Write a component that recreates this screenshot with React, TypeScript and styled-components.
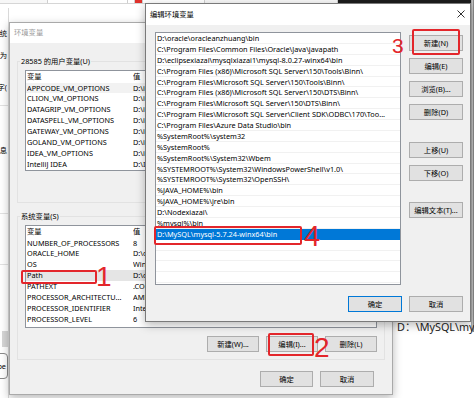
import React from "react";
import styled, { createGlobalStyle } from "styled-components";

const UI_FONT = `"Noto Sans", "Noto Sans CJK SC", sans-serif`;

const Global = createGlobalStyle`
  html, body { margin: 0; padding: 0; background: #ffffff; }
  body { font-family: ${UI_FONT}; }
  * { box-sizing: border-box; }
`;

const Desktop = styled.div`
  position: relative;
  width: 474px;
  height: 398px;
  overflow: hidden;
  background: #ffffff;
  font-family: ${UI_FONT};
  font-size: 7.3px;
  color: #000;
`;

const Win = styled.div<{ $x: number; $y: number; $w: number; $h: number }>`
  position: absolute;
  left: ${(p) => p.$x}px;
  top: ${(p) => p.$y}px;
  width: ${(p) => p.$w}px;
  height: ${(p) => p.$h}px;
`;

/* ---------- background windows ---------- */
const TopStrip = styled(Win)`
  display: flex;
  background: #ffffff;
`;
const TopCell = styled.div<{ $w: number; $c: string }>`
  width: ${(p) => p.$w}px;
  flex: none;
  height: 100%;
  background: ${(p) => p.$c};
  border-right: 1px solid #cfcfcf;
  border-bottom: 1px solid #d6d6d6;
`;
const RightEdge = styled(Win)`
  background: linear-gradient(to right, #8a8a8a, #d0d0d0 40%, #6f6f6f);
`;

const BackWindow = styled(Win)`
  display: flex;
  flex-direction: column;
  background: #ffffff;
  border-right: 1px solid #d9d9d9;
`;
const SideLabel = styled.div<{ $mt: number }>`
  margin-top: ${(p) => p.$mt}px;
  height: 12px;
  line-height: 12px;
  text-align: right;
  padding-right: 1px;
  white-space: nowrap;
  font-size: 7.3px;
`;
const SideRule = styled.div<{ $mt: number }>`
  margin-top: ${(p) => p.$mt}px;
  height: 1px;
  background: #e2e2e2;
`;
const SideBlock = styled.div<{ $mt: number }>`
  margin-top: ${(p) => p.$mt}px;
  margin-left: auto;
  width: 6px;
  height: 16px;
  background: #d6d6d6;
`;
const SideButton = styled.div<{ $mt: number }>`
  margin-top: ${(p) => p.$mt}px;
  height: 26px;
  border: 1px solid #8a8a8a;
  border-radius: 4px;
  text-align: right;
  line-height: 24px;
  padding-right: 1px;
  font-size: 7.3px;
`;

/* ---------- dialogs ---------- */
const Dialog = styled(Win)<{ $active?: boolean }>`
  display: flex;
  flex-direction: column;
  background: #f0f0f0;
  border: 1px solid ${(p) => (p.$active ? "#7a7a7a" : "#a9a9a9")};
  box-shadow: 0 3px 9px rgba(0, 0, 0, 0.28);
`;
const TitleBar = styled.div<{ $active?: boolean; $h: number }>`
  height: ${(p) => p.$h}px;
  flex: none;
  display: flex;
  align-items: center;
  justify-content: space-between;
  padding: 0 5px 2px 4px;
  background: #ffffff;
  color: ${(p) => (p.$active ? "#000" : "#9a9a9a")};
  font-size: 7.3px;
`;
const CloseIcon = () => (
  <svg width="8" height="8" viewBox="0 0 8 8">
    <path d="M0.5 0.5 L7.5 7.5 M7.5 0.5 L0.5 7.5" stroke="#1a1a1a" strokeWidth="0.9" />
  </svg>
);

const EnvBody = styled.div`
  flex: 1;
  display: flex;
  flex-direction: column;
  padding: 0 7px 0 7px;
`;
const Group = styled.fieldset<{ $mt: number }>`
  margin: ${(p) => p.$mt}px 0 0 0;
  padding: 4px 7px 7px 7px;
  border: 1px solid #e2e2e2;
  min-width: 0;
  display: flex;
  flex-direction: column;
`;
const Legend = styled.legend`
  margin-left: -5px;
  padding: 0 1px;
  font-size: 7.3px;
  line-height: 10px;
  height: 10px;
`;

const ListBox = styled.div<{ $h: number }>`
  height: ${(p) => p.$h}px;
  flex: none;
  background: #ffffff;
  border: 1px solid #8f949c;
  overflow: hidden;
`;
const VarHeader = styled.div`
  display: grid;
  grid-template-columns: 106px 1fr;
  height: 11.5px;
  line-height: 11.5px;
  padding-left: 1px;
  white-space: nowrap;
`;
const VarRow = styled.div<{ $sel?: string }>`
  display: grid;
  grid-template-columns: 106px 1fr;
  height: 10.86px;
  line-height: 10.86px;
  padding-left: 1px;
  white-space: nowrap;
  overflow: hidden;
  background: ${(p) => p.$sel ?? "transparent"};
`;
const Cell = styled.span`
  overflow: hidden;
  white-space: nowrap;
`;

const BtnRow = styled.div<{ $mt: number; $pr?: number }>`
  display: flex;
  justify-content: flex-end;
  gap: 7px;
  margin-top: ${(p) => p.$mt}px;
  padding-right: ${(p) => p.$pr ?? 0}px;
`;
const Btn = styled.button<{ $default?: boolean; $w?: number }>`
  width: ${(p) => p.$w ?? 53}px;
  height: 16px;
  flex: none;
  padding: 0;
  margin: 0;
  background: #e1e1e1;
  border: 1px solid ${(p) => (p.$default ? "#0078d7" : "#adadad")};
  font-family: ${UI_FONT};
  font-size: 7.3px;
  color: #000;
  line-height: 14px;
`;

/* edit dialog */
const EditBody = styled.div`
  flex: 1;
  display: flex;
  flex-direction: column;
  padding: 7px 7px 10px 9px;
`;
const EditTop = styled.div`
  display: flex;
  gap: 8px;
`;
const PathList = styled(ListBox)`
  width: 246px;
`;
const PathRow = styled.div<{ $sel?: boolean }>`
  height: 10.89px;
  line-height: 10.89px;
  padding-left: 1px;
  white-space: nowrap;
  overflow: hidden;
  background: ${(p) => (p.$sel ? "#0078d7" : "transparent")};
  color: ${(p) => (p.$sel ? "#ffffff" : "#000")};
  box-shadow: inset 0 -1px 0 ${(p) => (p.$sel ? "#0078d7" : "#f1f1f1")};
`;
const SideButtons = styled.div`
  display: flex;
  flex-direction: column;
  padding-top: 3px;
`;
const SideBtn = styled(Btn)<{ $gap: number }>`
  margin-top: ${(p) => p.$gap}px;
`;

/* desktop text + annotations */
const DesktopNote = styled(Win)`
  font-family: "Noto Sans", "Noto Sans CJK SC", sans-serif;
  font-size: 10.8px;
  line-height: 14px;
  color: #222;
  white-space: nowrap;
  overflow: hidden;
`;
const RedBox = styled(Win)`
  border: 2px solid #e3262b;
  border-radius: 2px;
`;
const RedNum = styled.div<{ $x: number; $y: number; $size: number }>`
  position: absolute;
  left: ${(p) => p.$x}px;
  top: ${(p) => p.$y}px;
  font-family: "Liberation Sans", Arial, sans-serif;
  font-size: ${(p) => p.$size}px;
  line-height: 1;
  color: #e3262b;
`;

const userVars: [string, string, string?][] = [
  ["APPCODE_VM_OPTIONS", "D:\\idea\\jetbra\\vmoptions\\appcode.vmoptions", "#f2f2f2"],
  ["CLION_VM_OPTIONS", "D:\\idea\\jetbra\\vmoptions\\clion.vmoptions"],
  ["DATAGRIP_VM_OPTIONS", "D:\\idea\\jetbra\\vmoptions\\datagrip.vmoptions"],
  ["DATASPELL_VM_OPTIONS", "D:\\idea\\jetbra\\vmoptions\\dataspell.vmoptions"],
  ["GATEWAY_VM_OPTIONS", "D:\\idea\\jetbra\\vmoptions\\gateway.vmoptions"],
  ["GOLAND_VM_OPTIONS", "D:\\idea\\jetbra\\vmoptions\\goland.vmoptions"],
  ["IDEA_VM_OPTIONS", "D:\\idea\\jetbra\\vmoptions\\idea.vmoptions"],
  ["IntelliJ IDEA", "D:\\IntelliJ IDEA 2021.3\\bin;"],
];

const sysVars: [string, string, string?][] = [
  ["NUMBER_OF_PROCESSORS", "8"],
  ["ORACLE_HOME", "D:\\oracle\\oracleanzhuang"],
  ["OS", "Windows_NT"],
  ["Path", "D:\\oracle\\oracleanzhuang\\bin;C:\\Program Files", "#e5e5e5"],
  ["PATHEXT", ".COM;.EXE;.BAT;.CMD;.VBS;.VBE"],
  ["PROCESSOR_ARCHITECTU...", "AMD64"],
  ["PROCESSOR_IDENTIFIER", "Intel64 Family 6 Model 158"],
  ["PROCESSOR_LEVEL", "6"],
];

const paths = [
  "D:\\oracle\\oracleanzhuang\\bin",
  "C:\\Program Files\\Common Files\\Oracle\\Java\\javapath",
  "D:\\eclipsexiazai\\mysqlxiazai1\\mysql-8.0.27-winx64\\bin",
  "C:\\Program Files (x86)\\Microsoft SQL Server\\150\\Tools\\Binn\\",
  "C:\\Program Files\\Microsoft SQL Server\\150\\Tools\\Binn\\",
  "C:\\Program Files (x86)\\Microsoft SQL Server\\150\\DTS\\Binn\\",
  "C:\\Program Files\\Microsoft SQL Server\\150\\DTS\\Binn\\",
  "C:\\Program Files\\Microsoft SQL Server\\Client SDK\\ODBC\\170\\Too...",
  "C:\\Program Files\\Azure Data Studio\\bin",
  "%SystemRoot%\\system32",
  "%SystemRoot%",
  "%SystemRoot%\\System32\\Wbem",
  "%SYSTEMROOT%\\System32\\WindowsPowerShell\\v1.0\\",
  "%SYSTEMROOT%\\System32\\OpenSSH\\",
  "%JAVA_HOME%\\bin",
  "%JAVA_HOME%\\jre\\bin",
  "D:\\Nodexiazai\\",
  "%mysql%\\bin",
  "D:\\MySQL\\mysql-5.7.24-winx64\\bin",
  "",
  "",
  "",
  "",
];

const VarList = ({ rows, h }: { rows: [string, string, string?][]; h: number }) => (
  <ListBox $h={h}>
    <VarHeader>
      <Cell>变量</Cell>
      <Cell>值</Cell>
    </VarHeader>
    {rows.map(([k, v, sel]) => (
      <VarRow key={k} $sel={sel}>
        <Cell>{k}</Cell>
        <Cell>{v}</Cell>
      </VarRow>
    ))}
  </ListBox>
);

export default function App() {
  return (
    <>
      <Global />
      <Desktop>
        <TopStrip $x={0} $y={-14} $w={474} $h={18}>
          <TopCell $w={48} $c="#f7f7f7" />
          <TopCell $w={80} $c="#ffffff" />
          <TopCell $w={7} $c="#ffffff" />
          <TopCell $w={8} $c="#e0322c" />
          <TopCell $w={62} $c="#ffffff" />
          <TopCell $w={133} $c="#f7f7f7" />
          <TopCell $w={136} $c="#1c1c1c" />
        </TopStrip>
        <RightEdge $x={471} $y={0} $w={3} $h={332} />

        <BackWindow $x={-80} $y={8} $w={89} $h={395}>
          <SideLabel $mt={19}>系统</SideLabel>
          <SideLabel $mt={10}>行为</SideLabel>
          <SideLabel $mt={20}>数字(</SideLabel>
          <SideRule $mt={12} />
          <SideLabel $mt={38}>信息</SideLabel>
          <SideRule $mt={57} />
          <SideRule $mt={50} />
          <SideBlock $mt={66} />
          <SideButton $mt={6}>Type</SideButton>
        </BackWindow>

        <Dialog $x={9} $y={22} $w={384} $h={373}>
          <TitleBar $h={20}>
            <span>环境变量</span>
          </TitleBar>
          <EnvBody>
            <Group $mt={13}>
              <Legend>28585 的用户变量(U)</Legend>
              <VarList rows={userVars} h={101} />
              <BtnRow $mt={8}>
                <Btn $w={52}>新建(N)...</Btn>
                <Btn $w={52}>编辑(E)...</Btn>
                <Btn $w={52}>删除(D)</Btn>
              </BtnRow>
            </Group>
            <Group $mt={8}>
              <Legend>系统变量(S)</Legend>
              <VarList rows={sysVars} h={103} />
              <BtnRow $mt={8}>
                <Btn $w={52}>新建(W)...</Btn>
                <Btn $w={52}>编辑(I)...</Btn>
                <Btn $w={52}>删除(L)</Btn>
              </BtnRow>
            </Group>
            <BtnRow $mt={11} $pr={11}>
              <Btn $w={53}>确定</Btn>
              <Btn $w={54}>取消</Btn>
            </BtnRow>
          </EnvBody>
        </Dialog>

        <DesktopNote $x={397} $y={320} $w={77} $h={16}>
          D：\MySQL\mysql-5.7.24-winx64\bin
        </DesktopNote>

        <Dialog $x={145} $y={3} $w={326} $h={319} $active>
          <TitleBar $h={21} $active>
            <span>编辑环境变量</span>
            <CloseIcon />
          </TitleBar>
          <EditBody>
            <EditTop>
              <PathList $h={253}>
                {paths.map((p, i) => (
                  <PathRow key={i} $sel={i === 18}>
                    {p}
                  </PathRow>
                ))}
              </PathList>
              <SideButtons>
                <SideBtn $gap={0} $w={54}>新建(N)</SideBtn>
                <SideBtn $gap={7} $w={54}>编辑(E)</SideBtn>
                <SideBtn $gap={7} $w={54}>浏览(B)...</SideBtn>
                <SideBtn $gap={7} $w={54}>删除(D)</SideBtn>
                <SideBtn $gap={22} $w={54}>上移(U)</SideBtn>
                <SideBtn $gap={7} $w={54}>下移(O)</SideBtn>
                <SideBtn $gap={21} $w={54}>编辑文本(T)...</SideBtn>
              </SideButtons>
            </EditTop>
            <BtnRow $mt={11} $pr={0}>
              <Btn $default $w={54}>确定</Btn>
              <Btn $w={54}>取消</Btn>
            </BtnRow>
          </EditBody>
        </Dialog>

        <RedBox $x={21} $y={270} $w={76} $h={14} />
        <RedNum $x={96} $y={263} $size={28}>1</RedNum>
        <RedBox $x={268} $y={333} $w={46} $h={23} />
        <RedNum $x={314} $y={334} $size={28}>2</RedNum>
        <RedBox $x={412} $y={29} $w={48} $h={26} />
        <RedNum $x={392} $y={35} $size={21}>3</RedNum>
        <RedBox $x={154} $y={226} $w={148} $h={19} />
        <RedNum $x={304} $y={222} $size={29}>4</RedNum>
      </Desktop>
    </>
  );
}
